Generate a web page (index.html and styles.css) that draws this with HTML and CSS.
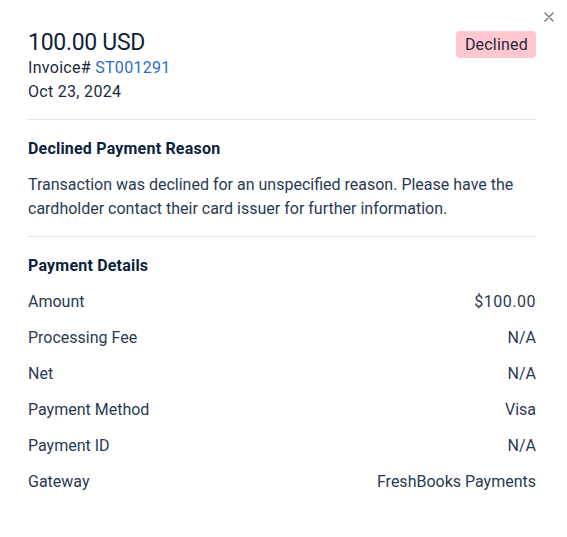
FILE: index.html
```html
<!DOCTYPE html>
<html lang="en">
<head>
<meta charset="utf-8">
<title>Payment</title>
<link rel="stylesheet" href="styles.css">
</head>
<body>
<div class="panel">
  <button class="close" aria-label="Close">
    <svg width="10" height="10" viewBox="0 0 10 10"><path d="M1 1L9 9M9 1L1 9" stroke="#6b7686" stroke-width="1.4" stroke-linecap="round"/></svg>
  </button>
  <header class="head">
    <div class="head-info">
      <div class="amount">100.00 USD</div>
      <div class="line">Invoice# <a class="link" href="#">ST001291</a></div>
      <div class="line">Oct 23, 2024</div>
    </div>
    <span class="badge">Declined</span>
  </header>
  <section class="section">
    <h2 class="title">Declined Payment Reason</h2>
    <p class="text">Transaction was declined for an unspecified reason. Please have the cardholder contact their card issuer for further information.</p>
  </section>
  <section class="section last">
    <h2 class="title">Payment Details</h2>
    <div class="rows">
      <div class="row"><span>Amount</span><span class="num">$100.00</span></div>
      <div class="row"><span>Processing Fee</span><span>N/A</span></div>
      <div class="row"><span>Net</span><span>N/A</span></div>
      <div class="row"><span>Payment Method</span><span>Visa</span></div>
      <div class="row"><span>Payment ID</span><span>N/A</span></div>
      <div class="row"><span>Gateway</span><span>FreshBooks Payments</span></div>
    </div>
  </section>
</div>
</body>
</html>
```

FILE: styles.css
```css
* { box-sizing: border-box; }
html, body { margin: 0; background: #fff; }
body {
  font-family: Roboto, "Noto Sans", sans-serif;
  color: #1b2a40;
  font-size: 16px;
  line-height: 24px;
}
.panel {
  position: relative;
  padding: 28px 31px 40px 28px;
}
.close {
  position: absolute;
  top: 12px;
  right: 13px;
  width: 10px;
  height: 10px;
  padding: 0;
  border: 0;
  background: none;
  display: flex;
}
.head {
  display: flex;
  justify-content: space-between;
  align-items: flex-start;
  padding-bottom: 15px;
  border-bottom: 1px solid #e3e5e8;
}
.amount {
  padding-top: 2px;
  font-size: 23px;
  line-height: 26px;
  letter-spacing: -0.3px;
  color: #0e1f3b;
}
.line { color: #1b2a40; letter-spacing: 0.3px; }
.link { color: #2b6cc9; text-decoration: none; }
.badge {
  margin-top: 3px;
  background: #ffc8cf;
  color: #1b2a40;
  border-radius: 4px;
  padding: 2px 8px 1px 9px;
  line-height: 24px;
  letter-spacing: 0.2px;
}
.section {
  padding: 17px 0 15px;
  border-bottom: 1px solid #e3e5e8;
}
.section.last { border-bottom: 0; }
.title {
  margin: 0 0 12px;
  font-size: 16px;
  line-height: 24px;
  font-weight: 700;
  letter-spacing: 0.2px;
  color: #0e1f3b;
}
.text {
  margin: 0;
  color: #2a3a52;
}
.rows {
  display: flex;
  flex-direction: column;
  gap: 12px;
}
.row {
  display: flex;
  justify-content: space-between;
  color: #2a3a52;
}
.num { letter-spacing: 0.5px; }
```
